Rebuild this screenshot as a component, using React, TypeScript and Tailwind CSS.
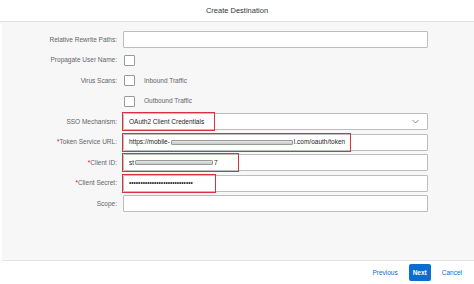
import type { ReactNode } from 'react'

const font = { fontFamily: '"Liberation Sans", Arial, sans-serif' }

function Label({ children, required }: { children: ReactNode; required?: boolean }) {
  return (
    <div className="flex h-full items-center justify-end text-[6.5px] text-[#62666a]">
      {required && <span className="text-[#e00]">*</span>}
      {children}
    </div>
  )
}

function Field({ children, mark }: { children?: ReactNode; mark?: number }) {
  return (
    <div className="relative flex h-full items-center rounded-[1px] border border-[#bdbdbd] bg-white px-[5px] text-[6.5px] text-[#1d1d1d]">
      {children}
      {mark && (
        <div
          className="pointer-events-none absolute top-[-2px] bottom-[-2px] left-[-2px] border-[1.5px] border-[#d8323c]"
          style={{ width: mark }}
        />
      )}
    </div>
  )
}

function Checkbox() {
  return <div className="h-[11px] w-[11px] rounded-[1px] border border-[#9a9a9a] bg-white" />
}

function Redacted({ width }: { width: number }) {
  return (
    <span
      className="mx-[1px] inline-block h-[5px] rounded-[1px] border border-[#9a9a9a] bg-gradient-to-b from-[#e6e6e6] to-[#c9c9c9]"
      style={{ width }}
    />
  )
}

export default function App() {
  return (
    <div className="flex h-[284px] w-[474px] flex-col bg-white" style={font}>
      <div className="flex h-[22px] shrink-0 items-center justify-center border-b border-[#e2e2e2] text-[7.5px] text-[#32363a] shadow-[0_1px_2px_rgba(0,0,0,0.06)]">
        Create Destination
      </div>

      <div className="ml-[2px] h-[239px] border-b border-[#e4e4e4] bg-[#f7f7f7] pt-[9px]">
        <div className="grid grid-cols-[115px_305px] gap-x-[6px] gap-y-[3.5px] [grid-auto-rows:17px]">
          <Label>Relative Rewrite Paths:</Label>
          <Field />

          <Label>Propagate User Name:</Label>
          <div className="flex items-center pl-[1px]">
            <Checkbox />
          </div>

          <Label>Virus Scans:</Label>
          <div className="flex items-center gap-[9px] pl-[1px] text-[6.5px] text-[#62666a]">
            <Checkbox />
            <span>Inbound Traffic</span>
          </div>

          <div />
          <div className="flex items-center gap-[9px] pl-[1px] text-[6.5px] text-[#62666a]">
            <Checkbox />
            <span>Outbound Traffic</span>
          </div>

          <Label>SSO Mechanism:</Label>
          <Field mark={93}>
            <span className="flex-1 font-medium">OAuth2 Client Credentials</span>
            <svg width="7" height="5" viewBox="0 0 7 5" className="mr-[3px]">
              <path d="M0.5 1 L3.5 4 L6.5 1" fill="none" stroke="#6a6d70" strokeWidth="0.8" />
            </svg>
          </Field>

          <Label required>Token Service URL:</Label>
          <Field mark={229}>
            <span className="flex items-center">
              https://mobile-
              <Redacted width={122} />
              l.com/oauth/token
            </span>
          </Field>

          <Label required>Client ID:</Label>
          <Field mark={117}>
            <span className="flex items-center">
              st
              <Redacted width={78} />7
            </span>
          </Field>

          <Label required>Client Secret:</Label>
          <Field mark={94}>
            <span>••••••••••••••••••••••••••••</span>
          </Field>

          <Label>Scope:</Label>
          <Field />
        </div>
      </div>

      <div className="flex flex-1 items-center justify-end gap-[9px] pr-[10px] text-[6.5px]">
        <button className="px-[2px] text-[#0a6ed1]">Previous</button>
        <button className="h-[17px] rounded-[2px] bg-[#0a6ed1] px-[4px] font-bold text-white">Next</button>
        <button className="px-[2px] text-[#0a6ed1]">Cancel</button>
      </div>
    </div>
  )
}
